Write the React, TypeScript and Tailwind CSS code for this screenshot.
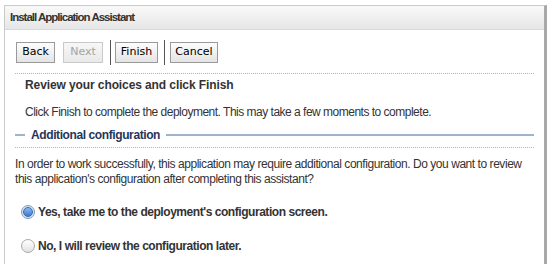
import React from 'react';

const sans = { fontFamily: '"Liberation Sans", Arial, sans-serif' };
const btnFont = { fontFamily: '"DejaVu Sans", Verdana, sans-serif' };

interface ButtonProps {
  label: string;
  width: string;
  disabled?: boolean;
}

const WizardButton: React.FC<ButtonProps> = ({ label, width, disabled }) => (
  <button
    disabled={disabled}
    style={btnFont}
    className={
      disabled
        ? `${width} h-[21px] flex items-center justify-center text-[11px] border border-[#c9c9c9] bg-gradient-to-b from-[#f7f7f7] to-[#e9e9e9] text-[#a3a3a3]`
        : `${width} h-[21px] flex items-center justify-center text-[11px] border border-[#9a9a9a] bg-gradient-to-b from-[#fdfdfd] to-[#e4e4e4] text-black`
    }
  >
    {label}
  </button>
);

const Radio: React.FC<{ checked?: boolean }> = ({ checked }) =>
  checked ? (
    <span className="w-[14px] h-[14px] rounded-full border border-[#7f9bbd] bg-[#dbe6f3] flex items-center justify-center shrink-0">
      <span className="w-[10px] h-[10px] rounded-full bg-gradient-to-b from-[#8fb8ee] to-[#3d78d0] border border-[#3567b3]" />
    </span>
  ) : (
    <span className="w-[14px] h-[14px] rounded-full border border-[#a9a9a9] bg-gradient-to-b from-[#ffffff] to-[#e2e2e2] shrink-0" />
  );

export default function App() {
  return (
    <div className="w-[550px] h-[264px] bg-white overflow-hidden pt-[5px] pl-[4px]" style={sans}>
      <div className="w-[543px] h-[259px] border-l border-t border-[#c8cbcb] border-r-[3px] border-r-[#a9a9a9] flex flex-col">
        <div className="h-[24px] shrink-0 bg-gradient-to-b from-[#f9f9f9] to-[#e5e6e5] border-b border-[#d9dbd9] flex items-center pl-[5px]">
          <span className="text-[11.5px] font-bold tracking-[-1px] text-[#333]">Install Application Assistant</span>
        </div>

        <div className="px-[10px]">
          <div className="flex items-center h-[25px] mt-[10px] pl-[1px]">
            <WizardButton label="Back" width="w-[39px]" />
            <div className="w-[8px]" />
            <WizardButton label="Next" width="w-[40px]" disabled />
            <div className="w-[7px]" />
            <div className="w-[1px] h-[25px] bg-[#555]" />
            <div className="w-[4px]" />
            <WizardButton label="Finish" width="w-[43px]" />
            <div className="w-[6px]" />
            <div className="w-[1px] h-[25px] bg-[#555]" />
            <div className="w-[5px]" />
            <WizardButton label="Cancel" width="w-[48px]" />
          </div>

          <div className="mt-[8px] border-t border-dotted border-[#b5b5b5]" />

          <div className="pl-[10px] text-[#333]">
            <div className="mt-[3px] h-[16px] leading-[16px] text-[12px] font-bold tracking-[-0.1px]">Review your choices and click Finish</div>
            <div className="mt-[11px] h-[16px] leading-[16px] text-[12px] tracking-[-0.5px]">
              Click Finish to complete the deployment. This may take a few moments to complete.
            </div>
          </div>

          <div className="mt-[7px] flex items-center h-[16px]">
            <div className="w-[10px] h-[2px] bg-[#9fb3cc]" />
            <span className="px-[6px] text-[12px] font-bold tracking-[-0.4px] text-[#1f3659] leading-[16px]">Additional configuration</span>
            <div className="flex-1 h-[2px] bg-[#9fb3cc]" />
          </div>
          <div className="mt-[4px] border-t border-dotted border-[#b5b5b5]" />

          <p className="mt-[9px] text-[12px] leading-[15px] tracking-[-0.45px] text-[#333]">
            In order to work successfully, this application may require additional configuration. Do you want to review
            this application's configuration after completing this assistant?
          </p>

          <label className="mt-[17px] flex items-center gap-[3px] pl-[6px] h-[16px]">
            <Radio checked />
            <span className="text-[12px] font-bold tracking-[-0.45px] text-[#333]">Yes, take me to the deployment's configuration screen.</span>
          </label>

          <label className="mt-[18px] flex items-center gap-[3px] pl-[6px] h-[16px]">
            <Radio />
            <span className="text-[12px] font-bold tracking-[-0.45px] text-[#333]">No, I will review the configuration later.</span>
          </label>
        </div>
      </div>
    </div>
  );
}
